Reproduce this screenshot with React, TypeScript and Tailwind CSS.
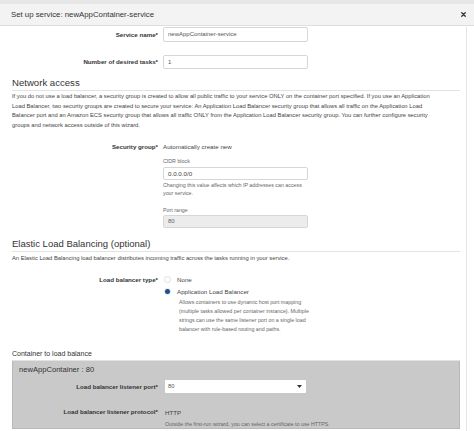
import React from 'react';

const FONT = { fontFamily: '"Liberation Sans", Arial, sans-serif' };

const Label: React.FC<{ children: React.ReactNode }> = ({ children }) => (
  <div className="w-[146px] shrink-0 text-right text-[6.2px] font-bold text-[#333] leading-[10px]">{children}</div>
);

const Radio: React.FC<{ checked?: boolean }> = ({ checked }) => (
  <span className="w-[7px] h-[7px] rounded-full border border-[#e0e0e0] bg-white flex items-center justify-center shrink-0">
    {checked && <span className="w-[5px] h-[5px] rounded-full bg-[#1d4f8c]" />}
  </span>
);

export default function App() {
  return (
    <div className="w-[474px] h-[431px] overflow-hidden bg-white text-[#333]" style={FONT}>
      {/* верхняя полоса */}
      <div className="h-[4px] bg-[#e6e6e6]" />

      {/* шапка модалки */}
      <div className="h-[22px] bg-[#f3f3f3] border-b border-[#dedede] flex items-center justify-between pl-[11px] pr-[8px]">
        <span className="text-[7.8px] text-[#333]">Set up service: newAppContainer-service</span>
        <svg width="5" height="5" viewBox="0 0 10 10">
          <path d="M1.5 1.5 L8.5 8.5 M8.5 1.5 L1.5 8.5" stroke="#333" strokeWidth="2.6" strokeLinecap="round" />
        </svg>
      </div>

      <div className="w-[467px] h-[405px] border-r border-[#e6e6e6] pl-[12px] pr-[7px]">
        {/* Service name */}
        <div className="flex items-center mt-[1px]">
          <Label>Service name*</Label>
          <div className="ml-[5px] w-[145px] h-[15px] border border-[#d6d6d6] rounded-[2px] bg-white flex items-center pl-[4px] text-[6px] text-[#555]">
            newAppContainer-service
          </div>
        </div>

        {/* Number of tasks */}
        <div className="flex items-center mt-[13px]">
          <Label>Number of desired tasks*</Label>
          <div className="ml-[5px] w-[145px] h-[14px] border border-[#d6d6d6] rounded-[2px] bg-white flex items-center pl-[4px] text-[6px] text-[#555]">
            1
          </div>
        </div>

        {/* Network access */}
        <div className="mt-[8px] w-[448px] text-[9.6px] leading-[12px] pb-[1px] border-b border-[#e2e2e2] text-[#333]">
          Network access
        </div>
        <div className="mt-[1px] text-[5.8px] leading-[9.7px] text-[#444] whitespace-nowrap">
          <div>If you do not use a load balancer, a security group is created to allow all public traffic to your service ONLY on the container port specified. If you use an Application</div>
          <div>Load Balancer, two security groups are created to secure your service: An Application Load Balancer security group that allows all traffic on the Application Load</div>
          <div>Balancer port and an Amazon ECS security group that allows all traffic ONLY from the Application Load Balancer security group. You can further configure security</div>
          <div>groups and network access outside of this wizard.</div>
        </div>

        {/* Security group */}
        <div className="flex mt-[11px]">
          <Label>Security group*</Label>
          <div className="ml-[5px] flex flex-col">
            <div className="text-[6.2px] leading-[10px] text-[#444]">Automatically create new</div>
            <div className="mt-[5px] text-[5.3px] leading-[8px] text-[#666]">CIDR block</div>
            <div className="mt-[2px] w-[145px] h-[13px] border border-[#d6d6d6] rounded-[2px] bg-white flex items-center pl-[4px] text-[6.2px] text-[#444]">
              0.0.0.0/0
            </div>
            <div className="mt-[1px] text-[5.3px] leading-[8px] text-[#666]">
              <div>Changing this value affects which IP addresses can access</div>
              <div>your service.</div>
            </div>
            <div className="mt-[9px] text-[5.3px] leading-[8px] text-[#666]">Port range</div>
            <div className="mt-[1px] w-[145px] h-[13px] border border-[#d6d6d6] rounded-[2px] bg-[#ececec] flex items-center pl-[4px] text-[6px] text-[#666]">
              80
            </div>
          </div>
        </div>

        {/* Elastic Load Balancing */}
        <div className="mt-[10px] w-[448px] text-[9.5px] leading-[12px] pb-[1px] border-b border-[#e2e2e2] text-[#333]">
          Elastic Load Balancing (optional)
        </div>
        <div className="mt-[2px] text-[5.8px] leading-[9.7px] text-[#444] whitespace-nowrap">
          An Elastic Load Balancing load balancer distributes incoming traffic across the tasks running in your service.
        </div>

        <div className="flex mt-[11px]">
          <Label>Load balancer type*</Label>
          <div className="ml-[5px] flex flex-col">
            <div className="flex items-center h-[10px]">
              <span className="ml-[1px]"><Radio /></span>
              <span className="ml-[6px] text-[6.2px] text-[#444]">None</span>
            </div>
            <div className="flex items-center h-[10px] mt-[2px]">
              <span className="ml-[1px]"><Radio checked /></span>
              <span className="ml-[6px] text-[6.2px] text-[#444]">Application Load Balancer</span>
            </div>
            <div className="ml-[16px] mt-[1px] text-[5.3px] leading-[9.2px] text-[#666] whitespace-nowrap">
              <div>Allows containers to use dynamic host port mapping</div>
              <div>(multiple tasks allowed per container instance). Multiple</div>
              <div>strings can use the same listener port on a single load</div>
              <div>balancer with rule-based routing and paths.</div>
            </div>
          </div>
        </div>

        {/* Container to load balance */}
        <div className="mt-[15px] w-[448px] text-[7px] leading-[10px] pb-[1px] border-b border-[#e2e2e2] text-[#333]">
          Container to load balance
        </div>
        <div className="w-[448px] h-[68px] bg-[#c9c9c9] border-x border-b border-[#b9b9b9]">
          <div className="pl-[6px] pt-[3px] text-[7.6px] leading-[11px] text-[#333]">newAppContainer : 80</div>
          <div className="flex items-center mt-[5px] -ml-px">
            <Label>Load balancer listener port*</Label>
            <div className="ml-[7px] w-[141px] h-[13px] bg-white rounded-[1px] flex items-center justify-between pl-[3px] pr-[4px] text-[5.8px] text-[#555]">
              <span>80</span>
              <svg width="5" height="3" viewBox="0 0 10 6">
                <path d="M0 0 L10 0 L5 6 Z" fill="#333" />
              </svg>
            </div>
          </div>
          <div className="flex items-center mt-[14px] -ml-px">
            <Label>Load balancer listener protocol*</Label>
            <div className="ml-[7px] text-[6.2px] text-[#444]">HTTP</div>
          </div>
          <div className="ml-[152px] mt-[3px] text-[5.3px] leading-[8px] text-[#666] whitespace-nowrap">
            Outside the first-run wizard, you can select a certificate to use HTTPS.
          </div>
        </div>
      </div>
    </div>
  );
}
